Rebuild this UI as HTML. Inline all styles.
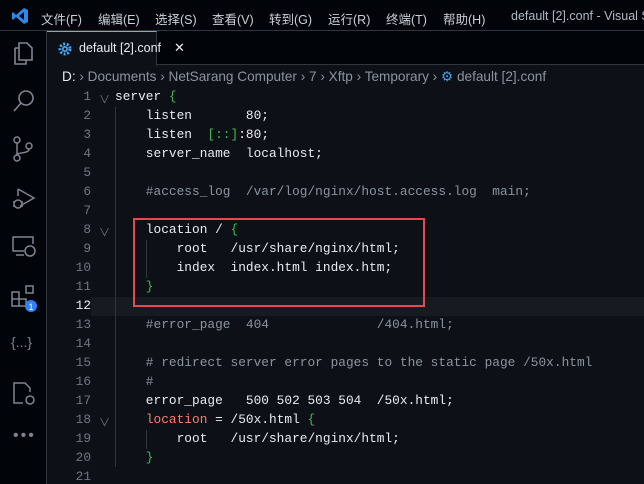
<!DOCTYPE html>
<html><head><meta charset="utf-8"><style>
*{margin:0;padding:0;box-sizing:border-box}
body{width:644px;height:484px;overflow:hidden;background:#0d1117;font-family:"Liberation Sans","Noto Sans CJK SC",sans-serif;color:#c9d1d9;position:relative}
#title{position:absolute;left:0;top:0;width:644px;height:31px;background:#010409;border-bottom:1px solid #30363d;font-size:12.5px;color:#c9d1d9;white-space:nowrap;overflow:hidden}
#title span{position:absolute;top:9px;white-space:nowrap}
#act{position:absolute;left:0;top:31px;width:47px;height:453px;background:#010409;border-right:1px solid #30363d}
#tabs{position:absolute;left:47px;top:31px;width:597px;height:34px;background:#010409;border-bottom:1px solid #30363d}
#tab{position:absolute;left:0;top:0;width:110px;height:35px;background:#0d1117;border-top:1px solid #f78166;border-right:1px solid #30363d;font-size:12.5px;color:#e6edf3;white-space:nowrap}
#crumb{position:absolute;left:62px;top:69px;font-size:13.6px;color:#8b949e;white-space:nowrap}
.ln{position:absolute;left:47px;width:44px;text-align:right;font-family:"Liberation Mono",monospace;font-size:12.8px;color:#6e7681}
.code{position:absolute;left:115px;font-family:"Liberation Mono",monospace;font-size:12.8px;color:#e6edf3;white-space:pre;letter-spacing:0.02px}
.c{color:#8b949e}.g{color:#3fb950}.r{color:#ff7b72}
.fold{position:absolute;left:99px;color:#6e7681;font-size:11px}
svg{position:absolute}
</style></head><body>
<div id="title">
<svg style="left:11px;top:7px" width="18" height="18" viewBox="0 0 18 18"><path d="M13 1 L17 3 V15 L13 17 L5 10 L2 13 L1 12 V6 L2 5 L5 8 Z M13 5 L8 9 L13 13 Z" fill="#2f88e6"/></svg>
<span style="left:41px">文件(F)</span><span style="left:98px">编辑(E)</span><span style="left:155px">选择(S)</span><span style="left:212px">查看(V)</span><span style="left:269px">转到(G)</span><span style="left:328px">运行(R)</span><span style="left:386px">终端(T)</span><span style="left:443px">帮助(H)</span><span style="left:511px;color:#b1bac4">default [2].conf - Visual Studio Code</span>
</div>
<div id="act">
<svg style="left:11px;top:10px" width="24" height="26" viewBox="0 0 24 26" fill="none" stroke="#7d8590" stroke-width="1.6"><path d="M8 2h8l5 5v12H8z M4 7h4 M4 7v16h11v-4"/></svg>
<svg style="left:12px;top:58px" width="24" height="24" viewBox="0 0 24 24" fill="none" stroke="#7d8590" stroke-width="1.6"><circle cx="14" cy="9" r="7"/><path d="M9 14 L2 22"/></svg>
<svg style="left:12px;top:105px" width="22" height="26" viewBox="0 0 22 26" fill="none" stroke="#7d8590" stroke-width="1.5"><circle cx="5" cy="4" r="3"/><circle cx="5" cy="22" r="3"/><circle cx="17" cy="10" r="3"/><path d="M5 7v12 M17 13c0 5-12 3-12 6"/></svg>
<svg style="left:10px;top:155px" width="26" height="26" viewBox="0 0 26 26" fill="none" stroke="#7d8590" stroke-width="1.5"><path d="M8 3 L24 12 L10 20 M8 3 V10"/><circle cx="8" cy="18" r="4"/><path d="M3 16h2 M3 20h2 M11 16h2 M11 20h2"/></svg>
<svg style="left:11px;top:203px" width="26" height="24" viewBox="0 0 26 24" fill="none" stroke="#7d8590" stroke-width="1.5"><path d="M13 17H2V3h20v7 M5 21h8"/><circle cx="19" cy="17" r="5"/></svg>
<svg style="left:10px;top:253px" width="30" height="30" viewBox="0 0 30 30" fill="none" stroke="#7d8590" stroke-width="1.5"><path d="M2 8h7v7H2z M2 15h7v7H2z M9 15h7v7H9z M16 2h7v7h-7z"/><circle cx="21" cy="22" r="6" fill="#2f81f7" stroke="none"/><text x="21" y="26" font-size="9" fill="#fff" stroke="none" text-anchor="middle" font-family="Liberation Sans">1</text></svg>
<div style="position:absolute;left:11px;top:303px;font-size:14px;color:#7d8590">{...}</div>
<svg style="left:12px;top:350px" width="24" height="26" viewBox="0 0 24 26" fill="none" stroke="#7d8590" stroke-width="1.5"><path d="M11 22H2V2h11l5 5v4"/><circle cx="18" cy="19" r="4"/></svg>
<div style="position:absolute;left:13px;top:396px;font-size:16px;color:#7d8590;letter-spacing:2px">•••</div>
</div>
<div id="tabs"><div id="tab">
<svg style="left:11px;top:10px" width="14" height="14" viewBox="0 0 14 14"><circle cx="7" cy="7" r="5" fill="none" stroke="#4aa3ef" stroke-width="3" stroke-dasharray="2 1.6"/><circle cx="7" cy="7" r="3" fill="#4aa3ef"/><circle cx="7" cy="7" r="1.3" fill="#0d1117"/></svg>
<span style="position:absolute;left:32px;top:9px">default [2].conf</span><span style="position:absolute;left:127px;top:8px;font-size:13px">✕</span></div></div>
<div id="crumb"><span style="color:#e6edf3">D:</span> › Documents › NetSarang Computer › 7 › Xftp › Temporary › <span style="color:#4aa3ef">⚙</span> default [2].conf</div>
<div style="position:absolute;left:91px;top:297px;width:553px;height:19px;background:#161b22"></div>
<div style="position:absolute;left:115px;top:107px;width:1px;height:360px;background:#30363d"></div>
<div style="position:absolute;left:146px;top:240px;width:1px;height:38px;background:#30363d"></div>
<div style="position:absolute;left:146px;top:430px;width:1px;height:19px;background:#30363d"></div>
<div style="position:absolute;left:133px;top:218px;width:292px;height:89px;border:2px solid #e5484d"></div>
<div class="ln" style="top:89px">1</div><div class="fold" style="top:91px">∨</div><div class="code" style="top:89px">server <span class="g">{</span></div>
<div class="ln" style="top:108px">2</div><div class="code" style="top:108px">    listen       80;</div>
<div class="ln" style="top:127px">3</div><div class="code" style="top:127px">    listen  <span class="g">[::]</span>:80;</div>
<div class="ln" style="top:146px">4</div><div class="code" style="top:146px">    server_name  localhost;</div>
<div class="ln" style="top:165px">5</div>
<div class="ln" style="top:184px">6</div><div class="code c" style="top:184px">    #access_log  /var/log/nginx/host.access.log  main;</div>
<div class="ln" style="top:203px">7</div>
<div class="ln" style="top:222px">8</div><div class="fold" style="top:224px">∨</div><div class="code" style="top:222px">    location / <span class="g">{</span></div>
<div class="ln" style="top:241px">9</div><div class="code" style="top:241px">        root   /usr/share/nginx/html;</div>
<div class="ln" style="top:260px">10</div><div class="code" style="top:260px">        index  index.html index.htm;</div>
<div class="ln" style="top:279px">11</div><div class="code g" style="top:279px">    }</div>
<div class="ln" style="top:298px;color:#e6edf3">12</div>
<div class="ln" style="top:317px">13</div><div class="code c" style="top:317px">    #error_page  404              /404.html;</div>
<div class="ln" style="top:336px">14</div>
<div class="ln" style="top:355px">15</div><div class="code c" style="top:355px">    # redirect server error pages to the static page /50x.html</div>
<div class="ln" style="top:374px">16</div><div class="code c" style="top:374px">    #</div>
<div class="ln" style="top:393px">17</div><div class="code" style="top:393px">    error_page   500 502 503 504  /50x.html;</div>
<div class="ln" style="top:412px">18</div><div class="fold" style="top:414px">∨</div><div class="code" style="top:412px">    <span class="r">location</span> = /50x.html <span class="g">{</span></div>
<div class="ln" style="top:431px">19</div><div class="code" style="top:431px">        root   /usr/share/nginx/html;</div>
<div class="ln" style="top:450px">20</div><div class="code g" style="top:450px">    }</div>
<div class="ln" style="top:469px">21</div>
</body></html>
